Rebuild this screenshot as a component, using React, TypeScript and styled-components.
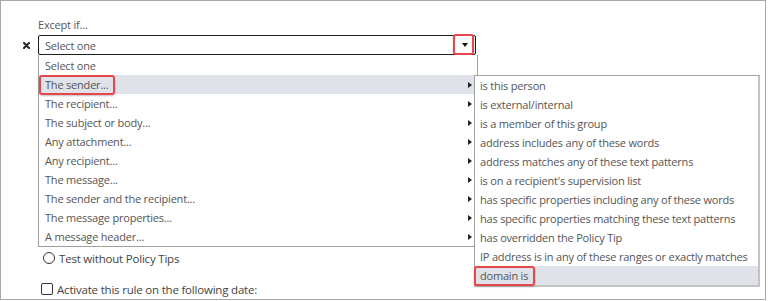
import React from "react";
import styled, { createGlobalStyle } from "styled-components";

const GlobalStyle = createGlobalStyle`
  html, body {
    margin: 0;
    padding: 0;
    background: #ffffff;
  }
  body {
    font-family: "Segoe UI", "Open Sans", "Noto Sans", sans-serif;
    font-size: 11px;
    letter-spacing: -0.2px;
    color: #4a4a4a;
  }
`;

const Panel = styled.div`
  box-sizing: border-box;
  width: 766px;
  height: 300px;
  border: 1px solid #a8a8a8;
  padding: 15px 0 0 22px;
  overflow: hidden;
`;

const Label = styled.div`
  margin-left: 15px;
  height: 18px;
  line-height: 18px;
  color: #555;
`;

const Row = styled.div`
  display: flex;
  align-items: center;
  gap: 8px;
  margin-top: 1px;
`;

const RemoveIcon = styled.svg`
  width: 7px;
  height: 7px;
  flex: none;
`;

const SelectWrap = styled.div`
  position: relative;
  width: 438px;
  height: 20px;
`;

const SelectBox = styled.div`
  box-sizing: border-box;
  display: flex;
  align-items: center;
  justify-content: space-between;
  height: 20px;
  border: 1px solid #1e1e1e;
  border-radius: 2px;
  padding: 0 4px 0 6px;
  color: #555;
`;

const CaretButton = styled.span`
  position: relative;
  display: flex;
  align-items: center;
  justify-content: center;
  width: 12px;
  height: 18px;
`;

const Caret = styled.span`
  width: 0;
  height: 0;
  border-left: 3px solid transparent;
  border-right: 3px solid transparent;
  border-top: 4px solid #111;
`;

const CaretCallout = styled.span`
  position: absolute;
  left: -6px;
  top: -2px;
  width: 21px;
  height: 21px;
  box-sizing: border-box;
  border: 2px solid #e8474a;
  border-radius: 3px;
  box-shadow: 0 1px 2px rgba(0, 0, 0, 0.25);
`;

const Marked = styled.span`
  display: inline-block;
  box-sizing: border-box;
  height: 20px;
  line-height: 16px;
  margin-left: -6px;
  padding: 0 5px 0 4px;
  border: 2px solid #e8474a;
  border-radius: 3px;
  box-shadow: 0 1px 2px rgba(0, 0, 0, 0.25);
  vertical-align: top;
`;

const List = styled.div`
  position: absolute;
  left: 0;
  top: 20px;
  width: 440px;
  box-sizing: border-box;
  border: 1px solid #a0a0a0;
  border-top: none;
  background: #fff;
  padding-top: 1px;
  z-index: 2;
`;

const Item = styled.div<{ $active?: boolean }>`
  position: relative;
  display: flex;
  align-items: center;
  justify-content: space-between;
  height: 19px;
  line-height: 19px;
  padding: 0 5px 0 6px;
  white-space: nowrap;
  color: #555;
  background: ${(p) => (p.$active ? "#dfe2e8" : "transparent")};
`;

const SubArrow = styled.span`
  width: 0;
  height: 0;
  border-top: 3.5px solid transparent;
  border-bottom: 3.5px solid transparent;
  border-left: 4px solid #222;
`;

const SubMenu = styled.div`
  position: absolute;
  left: 435px;
  top: 0;
  width: 286px;
  box-sizing: border-box;
  border: 1px solid #a0a0a0;
  border-right: 2px solid #c4c4c4;
  border-bottom: 2px solid #c4c4c4;
  background: #fff;
  z-index: 3;
`;

const SubItem = styled(Item)`
  padding-left: 5px;
`;

const Options = styled.div`
  margin-top: 196px;
  display: flex;
  flex-direction: column;
  gap: 17px;
`;

const Option = styled.label<{ $indent: number }>`
  display: flex;
  align-items: center;
  gap: 4px;
  height: 14px;
  margin-left: ${(p) => p.$indent}px;
  color: #444;
  font-size: 11.5px;
`;

const Radio = styled.span`
  width: 10px;
  height: 10px;
  border: 1px solid #333;
  border-radius: 50%;
  flex: none;
`;

const Check = styled.span`
  width: 10px;
  height: 10px;
  border: 1px solid #333;
  border-radius: 2px;
  flex: none;
`;

const senderOptions = [
  "Select one",
  "The sender...",
  "The recipient...",
  "The subject or body...",
  "Any attachment...",
  "Any recipient...",
  "The message...",
  "The sender and the recipient...",
  "The message properties...",
  "A message header...",
];

const senderConditions = [
  "is this person",
  "is external/internal",
  "is a member of this group",
  "address includes any of these words",
  "address matches any of these text patterns",
  "is on a recipient's supervision list",
  "has specific properties including any of these words",
  "has specific properties matching these text patterns",
  "has overridden the Policy Tip",
  "IP address is in any of these ranges or exactly matches",
  "domain is",
];

const App = () => {
  const lastCondition = senderConditions.length - 1;
  return (
    <>
      <GlobalStyle />
      <Panel>
        <Label>Except if...</Label>
        <Row>
          <RemoveIcon viewBox="0 0 7 7">
            <path d="M1 1 L6 6 M6 1 L1 6" stroke="#222" strokeWidth="2" strokeLinecap="round" />
          </RemoveIcon>
          <SelectWrap>
            <SelectBox>
              Select one
              <CaretButton>
                <Caret />
                <CaretCallout />
              </CaretButton>
            </SelectBox>
            <List>
              {senderOptions.map((name, index) => (
                <Item key={name} $active={index === 1}>
                  {index === 1 ? <Marked>{name}</Marked> : <span>{name}</span>}
                  {index > 0 && <SubArrow />}
                  {index === 1 && (
                    <SubMenu>
                      {senderConditions.map((cond, i) => (
                        <SubItem key={cond} $active={i === lastCondition}>
                          {i === lastCondition ? <Marked>{cond}</Marked> : <span>{cond}</span>}
                        </SubItem>
                      ))}
                    </SubMenu>
                  )}
                </Item>
              ))}
            </List>
          </SelectWrap>
        </Row>
        <Options>
          <Option $indent={20}>
            <Radio />
            Test without Policy Tips
          </Option>
          <Option $indent={18}>
            <Check />
            Activate this rule on the following date:
          </Option>
        </Options>
      </Panel>
    </>
  );
};

export default App;
